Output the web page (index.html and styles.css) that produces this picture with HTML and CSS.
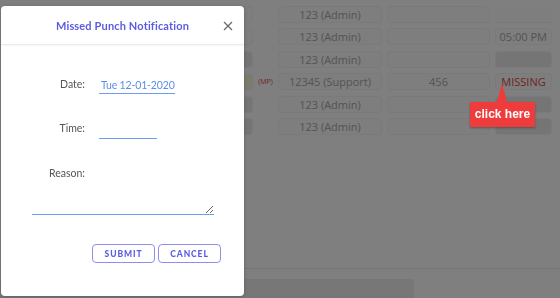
FILE: index.html
```html
<!DOCTYPE html>
<html lang="en">
<head>
    <meta charset="UTF-8">
    <meta name="viewport" content="width=device-width, initial-scale=1.0">
    <title>Missed Punch Notification</title>
    <link rel="stylesheet" href="styles.css">
</head>
<body>
    <div class="page">
        <div class="rows">
            <div class="row">
                <div class="cell first"></div>
                <span class="tag"></span>
                <div class="cell emp">123 (Admin)</div>
                <div class="cell note"></div>
                <div class="cell time plain"></div>
            </div>
            <div class="row">
                <div class="cell first"></div>
                <span class="tag"></span>
                <div class="cell emp">123 (Admin)</div>
                <div class="cell note"></div>
                <div class="cell time">05:00 PM</div>
            </div>
            <div class="row">
                <div class="cell first grey"></div>
                <span class="tag"></span>
                <div class="cell emp">123 (Admin)</div>
                <div class="cell note"></div>
                <div class="cell time grey"></div>
            </div>
            <div class="row">
                <div class="cell first yellow"></div>
                <span class="tag">(MP)</span>
                <div class="cell emp">12345 (Support)</div>
                <div class="cell note">456</div>
                <div class="cell time missing">MISSING</div>
            </div>
            <div class="row">
                <div class="cell first grey"></div>
                <span class="tag"></span>
                <div class="cell emp">123 (Admin)</div>
                <div class="cell note"></div>
                <div class="cell time grey"></div>
            </div>
            <div class="row">
                <div class="cell first grey"></div>
                <span class="tag"></span>
                <div class="cell emp">123 (Admin)</div>
                <div class="cell note"></div>
                <div class="cell time grey"></div>
            </div>
        </div>
        <div class="footer">
            <div class="footer-box"></div>
        </div>
    </div>

    <!-- dim layer + dialog -->
    <div class="overlay"></div>

    <div class="modal">
        <div class="modal-header">
            <h2>Missed Punch Notification</h2>
            <button class="close" type="button" aria-label="Close">
                <svg width="10" height="10" viewBox="0 0 10 10">
                    <path d="M1 1 L9 9 M9 1 L1 9" stroke="#6b6b6b" stroke-width="1.3" fill="none"/>
                </svg>
            </button>
        </div>
        <form class="modal-body">
            <div class="field">
                <label for="date">Date:</label>
                <input type="text" id="date" class="date" value="Tue 12-01-2020">
            </div>
            <div class="field">
                <label for="time">Time:</label>
                <input type="text" id="time" class="time-input">
            </div>
            <div class="field reason">
                <label for="reason">Reason:</label>
            </div>
            <textarea id="reason"></textarea>
            <div class="actions">
                <button type="submit">Submit</button>
                <button type="button">Cancel</button>
            </div>
        </form>
    </div>

    <div class="callout">click here</div>
</body>
</html>
```

FILE: styles.css
```css
body {
    margin: 0;
    padding: 0;
    font-family: 'Open Sans', 'Noto Sans', sans-serif;
    background: #ffffff;
    color: #333;
    overflow: hidden;
}
.page {
    width: 560px;
    height: 298px;
}
.rows {
    display: flex;
    flex-direction: column;
    gap: 5.4px;
    padding-top: 6px;
}
.row {
    display: flex;
    align-items: center;
    gap: 5px;
    height: 17px;
    padding-left: 150px;
}
.cell {
    box-sizing: border-box;
    height: 17px;
    border: 1px solid #f4f4f4;
    border-radius: 4px;
    background: #fcfcfc;
    font-size: 11px;
    line-height: 15px;
    color: #a8a8a8;
    text-align: center;
}
.cell.first { width: 103px; }
.cell.emp { width: 104px; }
.cell.note { width: 103px; }
.cell.time { width: 57px; text-align: right; padding-right: 4px; }
.cell.plain { border-color: transparent; border-bottom-color: #f4f4f4; border-radius: 0; }
.cell.grey { background: #eaeaea; }
.cell.yellow { background: #fbf9d8; }
.cell.missing { color: #e04848; text-align: center; padding: 0; }
.tag {
    width: 15px;
    font-size: 7px;
    color: #e04848;
    text-align: center;
}
.footer {
    margin-top: 133px;
    border-top: 1px solid #e8e8e8;
    padding-top: 10px;
}
.footer-box {
    width: 414px;
    height: 30px;
    background: #eeeeee;
}

.overlay {
    position: fixed;
    inset: 0;
    background: rgba(0, 0, 0, 0.5);
}
.modal {
    position: absolute;
    left: 1px;
    top: 6px;
    width: 243px;
    height: 290px;
    background: #ffffff;
    border-radius: 4px;
    box-shadow: 0 1px 4px rgba(0, 0, 0, 0.2);
    font-family: Lato, 'Open Sans', sans-serif;
}
.modal-header {
    position: relative;
    height: 38px;
    border-bottom: 1px solid #ebebeb;
    box-shadow: 0 1px 2px rgba(0, 0, 0, 0.04);
    display: flex;
    align-items: center;
    justify-content: center;
}
.modal-header h2 {
    margin: 0;
    font-size: 11px;
    font-weight: 700;
    color: #5a5ce2;
    letter-spacing: 0.15px;
}
.close {
    position: absolute;
    right: 11px;
    top: 15px;
    width: 10px;
    height: 10px;
    padding: 0;
    border: none;
    background: none;
    display: flex;
}
.modal-body {
    display: flex;
    flex-direction: column;
    padding-top: 29px;
}
.field {
    display: flex;
    align-items: center;
    height: 20px;
    margin-bottom: 24px;
}
.field label {
    width: 84px;
    text-align: right;
    font-size: 10.5px;
    color: #555;
}
.field input {
    margin-left: 14px;
    height: 17px;
    padding: 0 0 0 2px;
    border: none;
    border-bottom: 1px solid #6d9df0;
    font-family: inherit;
    font-size: 10.5px;
    letter-spacing: -0.15px;
    color: #5b8def;
    outline: none;
}
.field input.date { width: 76px; box-sizing: border-box; margin-top: 2px; }
.field input.time-input { width: 58px; box-sizing: border-box; margin-top: 4px; }
.field.reason { margin-bottom: 0; margin-top: 1px; }
textarea {
    display: block;
    box-sizing: border-box;
    width: 182px;
    height: 30px;
    margin: 2px 0 0 31px;
    padding: 0;
    border: none;
    border-bottom: 1px solid #6d9df0;
    outline: none;
    font-family: inherit;
}
.actions {
    display: flex;
    gap: 3px;
    margin: 29px 0 0 91px;
}
.actions button {
    width: 63px;
    height: 19px;
    padding: 0;
    border: 1px solid #8d8ff0;
    border-radius: 4px;
    background: #ffffff;
    font-family: Lato, 'Open Sans', sans-serif;
    font-size: 8.5px;
    font-weight: 900;
    letter-spacing: 0.9px;
    text-transform: uppercase;
    color: #5a5ce2;
}

.callout {
    position: absolute;
    left: 470px;
    top: 102px;
    width: 65px;
    height: 25px;
    background: #ee3b3b;
    color: #ffffff;
    font-family: 'Liberation Sans', Arial, sans-serif;
    font-size: 12px;
    font-weight: 700;
    line-height: 25px;
    text-align: center;
    box-shadow: 0 1px 2px rgba(0, 0, 0, 0.3);
}
.callout::before {
    content: "";
    position: absolute;
    left: 27px;
    top: -19px;
    border-left: 5px solid transparent;
    border-right: 5px solid transparent;
    border-bottom: 19px solid #ee3b3b;
}
```
